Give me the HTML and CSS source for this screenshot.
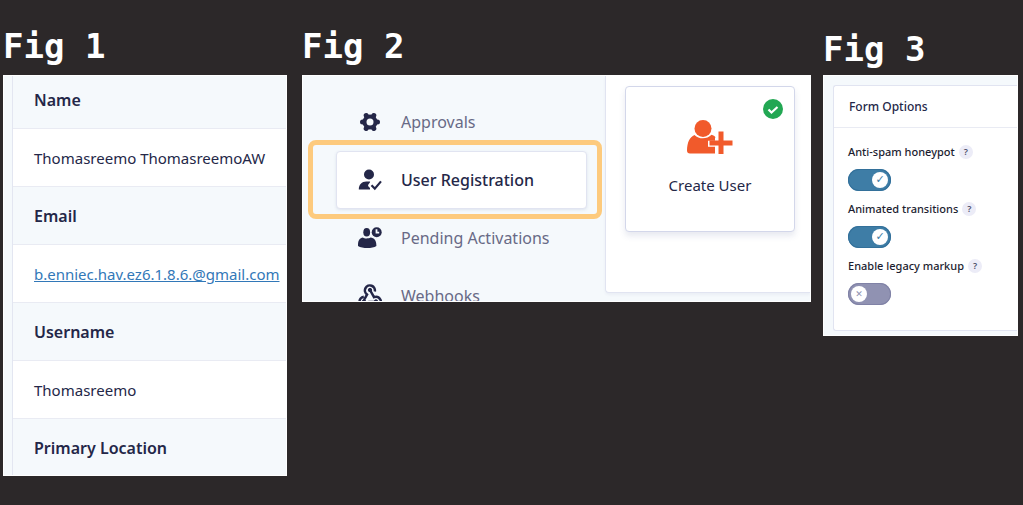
FILE: index.html
```html
<!DOCTYPE html>
<html lang="en">
<head>
    <meta charset="UTF-8">
    <meta name="viewport" content="width=device-width, initial-scale=1.0">
    <title>User Registration</title>
    <link rel="stylesheet" href="styles.css">
</head>
<body>

<main class="figures">

    <section class="figure figure-entry">
        <h2>Fig 1</h2>
        <div class="panel">
            <dl class="entry">
                <dt>Name</dt>
                <dd>Thomasreemo ThomasreemoAW</dd>
                <dt>Email</dt>
                <dd><a href="mailto:b.enniec.hav.ez6.1.8.6.@gmail.com">b.enniec.hav.ez6.1.8.6.@gmail.com</a></dd>
                <dt>Username</dt>
                <dd>Thomasreemo</dd>
                <dt>Primary Location</dt>
            </dl>
        </div>
    </section>

    <section class="figure">
        <h2>Fig 2</h2>
        <div class="panel settings">
            <nav class="menu">
                <a href="#approvals">
                    <svg viewBox="0 0 24 24" width="24" height="24" fill="currentColor" aria-hidden="true">
                        <g stroke="currentColor" stroke-width="5" stroke-linecap="round">
                            <path d="M4.500 12h3M16.500 12h3M8.200 5.500l1.500 2.600M14.300 15.900l1.500 2.600M15.800 5.500l-1.500 2.600M9.700 15.900l-1.500 2.600"/>
                        </g>
                        <circle cx="12" cy="12" r="5.500" fill="none" stroke="currentColor" stroke-width="4"/>
                        <circle cx="12" cy="12" r="3.500" fill="#f5f9fc"/>
                    </svg>
                    Approvals
                </a>
                <a href="#registration" class="active">
                    <svg viewBox="0 0 24 24" width="24" height="24" fill="currentColor" aria-hidden="true">
                        <circle cx="11" cy="6.500" r="5"/>
                        <path d="M.800 21.500c0-5 3-8 7.500-8h3.200c.500 0 .900.300.400.900l-1.500 2c-.500.700-.400 1.400.100 2l1.500 1.600v1.500z"/>
                        <path d="M13.500 17.300l3.300 3.300 6.200-7.200" fill="none" stroke="currentColor" stroke-width="2.200"/>
                    </svg>
                    User Registration
                </a>
                <a href="#activations">
                    <svg viewBox="0 0 24 24" width="24" height="24" fill="currentColor" aria-hidden="true">
                        <ellipse cx="8.700" cy="6.200" rx="3.400" ry="4.300"/>
                        <path d="M0 20c-.200-5.500 1.500-8 5-8.600 1.200 1.300 5.700 1.300 7.500.100 3.800.300 6 3 5.900 8.500-4 2.700-14 2.700-18.400 0z"/>
                        <circle cx="18.700" cy="6.300" r="5"/>
                        <path d="M18.500 3.300v3.300h2.700" fill="none" stroke="#f5f9fc" stroke-width="1.800"/>
                    </svg>
                    Pending Activations
                </a>
                <a href="#webhooks">
                    <svg viewBox="0 0 24 24" width="24" height="24" fill="none" stroke="currentColor" aria-hidden="true">
                        <g stroke-width="2.500">
                            <path d="M16.800 7.500a5 5 0 1 0-7.800 3l-3 5.500"/>
                            <path d="M12 6l4 7.200a5 5 0 1 1-1.500 8.300"/>
                            <path d="M5.800 12.800a5 5 0 1 0 5.700 5.200h6.500"/>
                        </g>
                        <g fill="currentColor">
                            <circle cx="12" cy="6" r="1.700"/>
                            <circle cx="6" cy="17.500" r="1.700"/>
                            <circle cx="18" cy="17.500" r="1.700"/>
                        </g>
                    </svg>
                    Webhooks
                </a>
            </nav>
            <div class="feeds">
                <button type="button" class="feed-card">
                    <svg class="feed-icon" viewBox="0 0 46 36" width="46" height="36" fill="#f15a2b" aria-hidden="true">
                        <circle cx="16" cy="9.500" r="8.500"/>
                        <path d="M7.500 16c4.500 4.500 12.500 4.500 17-.200 2 .600 3.200 1.400 4.200 2.700h-.700v3.300h-7v6h7v6.700H3c-2 0-3-1-3-3 .200-8 2.500-13.500 7.500-15.500z"/>
                        <path d="M31.500 12.500h5v9h9v5h-9v8.500h-5v-8.500h-9v-5h9z"/>
                    </svg>
                    <span>Create User</span>
                    <svg class="feed-state" viewBox="0 0 20 20" width="20" height="20" aria-hidden="true">
                        <circle cx="10" cy="10" r="10" fill="#22a753"/>
                        <path d="M5.500 10.500l3 3 6-5.500" fill="none" stroke="#fff" stroke-width="2.200"/>
                    </svg>
                </button>
            </div>
        </div>
    </section>

    <section class="figure figure-options">
        <h2>Fig 3</h2>
        <div class="panel">
            <form class="options">
                <h3>Form Options</h3>
                <div class="option">
                    <label for="honeypot">Anti-spam honeypot</label>
                    <button type="button" class="help">?</button>
                    <input type="checkbox" id="honeypot" class="toggle" checked>
                </div>
                <div class="option">
                    <label for="transitions">Animated transitions</label>
                    <button type="button" class="help">?</button>
                    <input type="checkbox" id="transitions" class="toggle" checked>
                </div>
                <div class="option">
                    <label for="legacy">Enable legacy markup</label>
                    <button type="button" class="help">?</button>
                    <input type="checkbox" id="legacy" class="toggle">
                </div>
            </form>
        </div>
    </section>

</main>

</body>
</html>
```
FILE: styles.css
```css
* {
    box-sizing: border-box;
}

body {
    margin: 0;
    background-color: #2c2829;
    color: #242748;
    font-family: "Noto Sans", "Open Sans", sans-serif;
    font-size: 16px;
}

.figures {
    display: grid;
    grid-template-columns: minmax(0, 287fr) minmax(0, 509fr) minmax(0, 195fr);
    column-gap: 12px;
    align-items: start;
    padding: 24px 5px 24px 3px;
}

.figure h2 {
    margin: 0;
    height: 51px;
    color: #fff;
    font-family: "DejaVu Sans Mono", monospace;
    font-size: 34px;
    font-weight: 700;
    line-height: 44px;
    white-space: nowrap;
}

.figure-options h2 {
    padding-top: 3px;
}

.figure-entry {
    padding-right: 3px;
}

.panel {
    overflow: hidden;
    border: 1px solid #fff;
    background-color: #f5f9fc;
}

/* Entry details */
.entry {
    margin: -5px 0 0 8px;
    border-left: 1px solid #e3e6f1;
}

.entry dt,
.entry dd {
    height: 58px;
    margin: 0;
    padding-left: 21px;
    border-bottom: 1px solid #e9ebf3;
    line-height: 59px;
    white-space: nowrap;
}

.entry dt {
    font-weight: 600;
}

.entry dd {
    background-color: #fff;
    font-size: 15px;
}

.entry dt:last-child {
    height: 56px;
    border-bottom: 0;
}

.entry a {
    color: #3278b8;
}

/* Settings menu */
.settings {
    display: grid;
    grid-template-columns: 302fr 205fr;
    grid-template-rows: 100%;
    height: 227px;
}

.menu {
    padding: 17px 18px 0 33px;
}

.menu a {
    position: relative;
    display: flex;
    align-items: center;
    gap: 19px;
    height: 58px;
    padding-left: 22px;
    color: #686a86;
    text-decoration: none;
    white-space: nowrap;
}

.menu svg {
    flex: none;
    color: #242748;
}

.menu .active {
    padding-left: 21px;
    border: 1px solid #e1e4f1;
    border-radius: 4px;
    background-color: #fff;
    box-shadow: 0 1px 3px rgba(60, 70, 130, 0.12);
    color: #242748;
    font-weight: 500;
}

.menu .active::after {
    content: "";
    position: absolute;
    inset: -12px -16px -11px -29px;
    border: 5px solid #fdca7d;
    border-radius: 8px;
}

.feeds {
    margin-bottom: 8px;
    padding: 10px 15px 0 19px;
    border: solid #e1e4f1;
    border-width: 0 0 1px 1px;
    border-radius: 0 0 0 4px;
    background-color: #fff;
    box-shadow: 0 2px 3px rgba(60, 70, 130, 0.06);
}

.feed-card {
    position: relative;
    display: flex;
    flex-direction: column;
    align-items: center;
    gap: 19px;
    width: 100%;
    height: 146px;
    padding: 32px 0 0;
    border: 1px solid #d3d7ea;
    border-radius: 4px;
    background-color: #fff;
    box-shadow: 0 4px 6px rgba(60, 70, 130, 0.12);
    color: #242748;
    font-family: inherit;
    font-size: 15px;
    line-height: 22px;
}

.feed-state {
    position: absolute;
    top: 12px;
    right: 11px;
}

/* Form options */
.options {
    height: 246px;
    margin: 9px 0 4px 9px;
    border: solid #e1e4f1;
    border-width: 1px 0 1px 1px;
    border-radius: 3px 0 0 3px;
    background-color: #fff;
    font-size: 11px;
}

.options h3 {
    margin: 0 0 15px;
    padding-left: 15px;
    border-bottom: 1px solid #e9ebf3;
    font-size: 12px;
    font-weight: 500;
    line-height: 41px;
}

.option {
    display: flex;
    flex-wrap: wrap;
    align-items: center;
    gap: 8px 4px;
    height: 57px;
    padding-left: 14px;
    align-content: flex-start;
    color: #1c1d30;
    font-weight: 500;
    line-height: 18px;
    white-space: nowrap;
}

.help {
    width: 14px;
    height: 14px;
    padding: 0;
    border: 0;
    border-radius: 50%;
    background-color: #ececf7;
    color: #4a4c68;
    font-family: inherit;
    font-size: 9px;
    font-weight: 600;
    line-height: 14px;
}

.toggle {
    display: flex;
    align-items: center;
    appearance: none;
    width: 43px;
    height: 22px;
    margin: 0 80px 0 0;
    padding: 0 3px;
    border-radius: 11px;
    background-color: #9092b2;
    box-shadow: inset 0 0 0 1px #8082a6;
}

.toggle::before {
    content: "✕";
    width: 16px;
    height: 16px;
    border-radius: 50%;
    background-color: #fff;
    color: #9092b2;
    font-family: "DejaVu Sans", sans-serif;
    font-size: 9px;
    line-height: 16px;
    text-align: center;
}

.toggle:checked {
    justify-content: flex-end;
    background-color: #3e7da6;
    box-shadow: inset 0 0 0 1px #33709a;
}

.toggle:checked::before {
    content: "✓";
    color: #3e7da6;
    font-size: 11px;
}
```
